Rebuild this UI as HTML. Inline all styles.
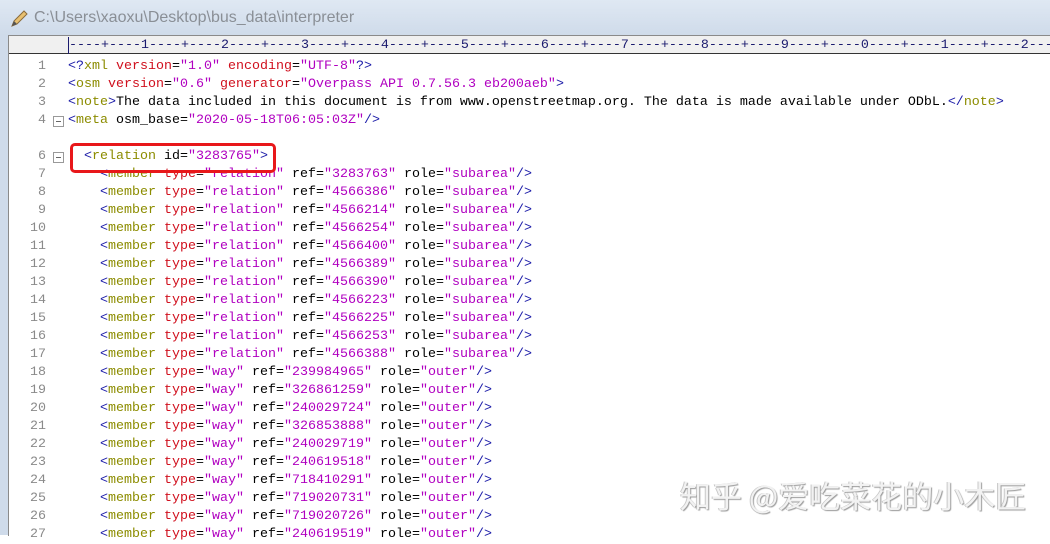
<!DOCTYPE html>
<html><head><meta charset="utf-8"><style>
body{margin:0;width:1050px;height:535px;overflow:hidden;background:#fff;position:relative;font-family:"Liberation Mono",monospace}
#title{position:absolute;left:0;top:0;width:1050px;height:35px;background:linear-gradient(#dfe8f3,#cfdbea);}
#title span{position:absolute;left:34px;top:9px;font:16px "Liberation Sans",sans-serif;color:#8a8f96}
#lb{position:absolute;left:0;top:35px;width:8px;height:500px;background:#cfdbea}
#frame{position:absolute;left:8px;top:35px;width:1042px;height:500px;border-top:1px solid #8a8a8a;border-left:1px solid #8a8a8a;background:#fff}
#ruler{position:absolute;left:9px;top:36px;width:1041px;height:17px;background:#f0f0f0;border-bottom:1px solid #333}
#ruler pre{position:absolute;left:59px;top:1px;margin:0;font:13.33px/17px "Liberation Mono",monospace;color:#1a1a6e;border-left:1px solid #1a1a6e}
.ln{position:absolute;left:9px;width:37px;text-align:right;font:13.33px/18px "Liberation Mono",monospace;color:#8a8a8a}
.cd{position:absolute;left:68px;margin:0;font:13.33px/18px "Liberation Mono",monospace;color:#000;white-space:pre}
.fold{position:absolute;left:53px;width:9px;height:9px;border:1px solid #999;background:#fff}
.fold:after{content:"";position:absolute;left:2px;top:4px;width:5px;height:1px;background:#666}
.b{color:#1c1ca8}.t{color:#8c8c00}.a{color:#d0101e}.v{color:#b000c0}
#box{position:absolute;left:70px;top:143px;width:200px;height:24px;border:3px solid #e8171a;border-radius:5px}
#wm{position:absolute;left:680px;top:472px;font:31px "Noto Sans CJK SC",sans-serif;color:#f2f2f2;text-shadow:1px 1px 1px #9a9a9a,-1px 0 0 #c8c8c8}
</style></head><body>
<div id="title"><svg style="position:absolute;left:9px;top:9px" width="20" height="20" viewBox="0 0 20 20"><path d="M3 17 L5 12 L15 2 L18 5 L8 15 Z" fill="#e8c070" stroke="#8a6a3a"/><path d="M3 17 L5 12 L8 15 Z" fill="#555"/></svg><span>C:\Users\xaoxu\Desktop\bus_data\interpreter</span></div>
<div id="lb"></div>
<div id="frame"></div>
<div id="ruler"><pre>----+----1----+----2----+----3----+----4----+----5----+----6----+----7----+----8----+----9----+----0----+----1----+----2---</pre></div>
<div class="ln" style="top:58px">1<br>2<br>3<br>4<br>&nbsp;<br>6<br>7<br>8<br>9<br>10<br>11<br>12<br>13<br>14<br>15<br>16<br>17<br>18<br>19<br>20<br>21<br>22<br>23<br>24<br>25<br>26<br>27</div>
<div class="fold" style="top:116px"></div>
<div class="fold" style="top:152px"></div>
<pre class="cd" style="top:58px"><span class="b">&lt;?</span><span class="t">xml</span> <span class="a">version</span>=<span class="v">"1.0"</span> <span class="a">encoding</span>=<span class="v">"UTF-8"</span><span class="b">?&gt;</span>
<span class="b">&lt;</span><span class="t">osm</span> <span class="a">version</span>=<span class="v">"0.6"</span> <span class="a">generator</span>=<span class="v">"Overpass API 0.7.56.3 eb200aeb"</span><span class="b">&gt;</span>
<span class="b">&lt;</span><span class="t">note</span><span class="b">&gt;</span>The data included in this document is from www.openstreetmap.org. The data is made available under ODbL.<span class="b">&lt;/</span><span class="t">note</span><span class="b">&gt;</span>
<span class="b">&lt;</span><span class="t">meta</span> osm_base=<span class="v">"2020-05-18T06:05:03Z"</span><span class="b">/&gt;</span>

  <span class="b">&lt;</span><span class="t">relation</span> id=<span class="v">"3283765"</span><span class="b">&gt;</span>
    <span class="b">&lt;</span><span class="t">member</span> <span class="a">type</span>=<span class="v">"relation"</span> ref=<span class="v">"3283763"</span> role=<span class="v">"subarea"</span><span class="b">/&gt;</span>
    <span class="b">&lt;</span><span class="t">member</span> <span class="a">type</span>=<span class="v">"relation"</span> ref=<span class="v">"4566386"</span> role=<span class="v">"subarea"</span><span class="b">/&gt;</span>
    <span class="b">&lt;</span><span class="t">member</span> <span class="a">type</span>=<span class="v">"relation"</span> ref=<span class="v">"4566214"</span> role=<span class="v">"subarea"</span><span class="b">/&gt;</span>
    <span class="b">&lt;</span><span class="t">member</span> <span class="a">type</span>=<span class="v">"relation"</span> ref=<span class="v">"4566254"</span> role=<span class="v">"subarea"</span><span class="b">/&gt;</span>
    <span class="b">&lt;</span><span class="t">member</span> <span class="a">type</span>=<span class="v">"relation"</span> ref=<span class="v">"4566400"</span> role=<span class="v">"subarea"</span><span class="b">/&gt;</span>
    <span class="b">&lt;</span><span class="t">member</span> <span class="a">type</span>=<span class="v">"relation"</span> ref=<span class="v">"4566389"</span> role=<span class="v">"subarea"</span><span class="b">/&gt;</span>
    <span class="b">&lt;</span><span class="t">member</span> <span class="a">type</span>=<span class="v">"relation"</span> ref=<span class="v">"4566390"</span> role=<span class="v">"subarea"</span><span class="b">/&gt;</span>
    <span class="b">&lt;</span><span class="t">member</span> <span class="a">type</span>=<span class="v">"relation"</span> ref=<span class="v">"4566223"</span> role=<span class="v">"subarea"</span><span class="b">/&gt;</span>
    <span class="b">&lt;</span><span class="t">member</span> <span class="a">type</span>=<span class="v">"relation"</span> ref=<span class="v">"4566225"</span> role=<span class="v">"subarea"</span><span class="b">/&gt;</span>
    <span class="b">&lt;</span><span class="t">member</span> <span class="a">type</span>=<span class="v">"relation"</span> ref=<span class="v">"4566253"</span> role=<span class="v">"subarea"</span><span class="b">/&gt;</span>
    <span class="b">&lt;</span><span class="t">member</span> <span class="a">type</span>=<span class="v">"relation"</span> ref=<span class="v">"4566388"</span> role=<span class="v">"subarea"</span><span class="b">/&gt;</span>
    <span class="b">&lt;</span><span class="t">member</span> <span class="a">type</span>=<span class="v">"way"</span> ref=<span class="v">"239984965"</span> role=<span class="v">"outer"</span><span class="b">/&gt;</span>
    <span class="b">&lt;</span><span class="t">member</span> <span class="a">type</span>=<span class="v">"way"</span> ref=<span class="v">"326861259"</span> role=<span class="v">"outer"</span><span class="b">/&gt;</span>
    <span class="b">&lt;</span><span class="t">member</span> <span class="a">type</span>=<span class="v">"way"</span> ref=<span class="v">"240029724"</span> role=<span class="v">"outer"</span><span class="b">/&gt;</span>
    <span class="b">&lt;</span><span class="t">member</span> <span class="a">type</span>=<span class="v">"way"</span> ref=<span class="v">"326853888"</span> role=<span class="v">"outer"</span><span class="b">/&gt;</span>
    <span class="b">&lt;</span><span class="t">member</span> <span class="a">type</span>=<span class="v">"way"</span> ref=<span class="v">"240029719"</span> role=<span class="v">"outer"</span><span class="b">/&gt;</span>
    <span class="b">&lt;</span><span class="t">member</span> <span class="a">type</span>=<span class="v">"way"</span> ref=<span class="v">"240619518"</span> role=<span class="v">"outer"</span><span class="b">/&gt;</span>
    <span class="b">&lt;</span><span class="t">member</span> <span class="a">type</span>=<span class="v">"way"</span> ref=<span class="v">"718410291"</span> role=<span class="v">"outer"</span><span class="b">/&gt;</span>
    <span class="b">&lt;</span><span class="t">member</span> <span class="a">type</span>=<span class="v">"way"</span> ref=<span class="v">"719020731"</span> role=<span class="v">"outer"</span><span class="b">/&gt;</span>
    <span class="b">&lt;</span><span class="t">member</span> <span class="a">type</span>=<span class="v">"way"</span> ref=<span class="v">"719020726"</span> role=<span class="v">"outer"</span><span class="b">/&gt;</span>
    <span class="b">&lt;</span><span class="t">member</span> <span class="a">type</span>=<span class="v">"way"</span> ref=<span class="v">"240619519"</span> role=<span class="v">"outer"</span><span class="b">/&gt;</span></pre>
<div id="box"></div>
<div id="wm">知乎 @爱吃菜花的小木匠</div>
</body></html>
